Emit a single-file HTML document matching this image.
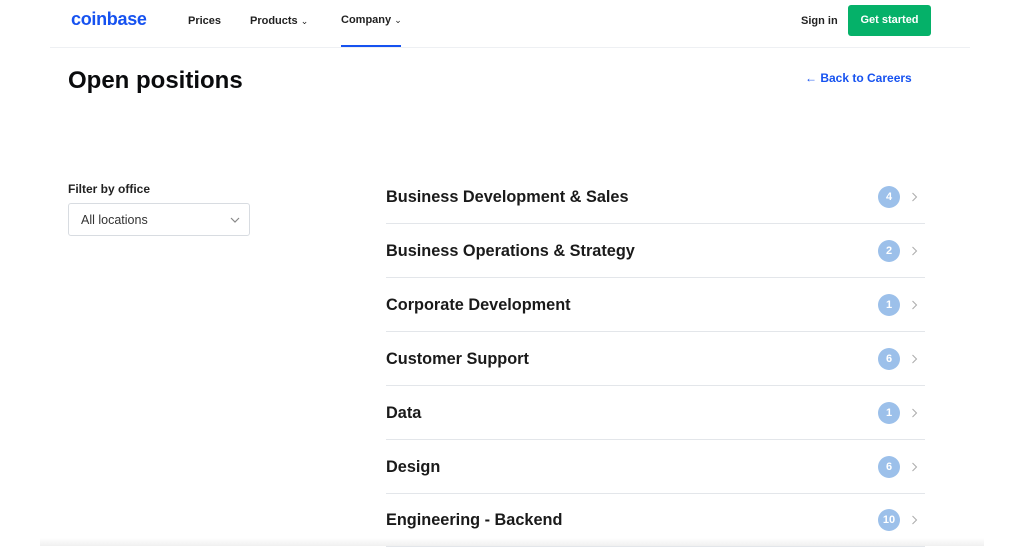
<!DOCTYPE html>
<html><head><style>
*{margin:0;padding:0;box-sizing:border-box}
body{width:1024px;height:546px;overflow:hidden;background:#fff;font-family:"Liberation Sans",sans-serif;color:#0a0b0d;position:relative}
.a{position:absolute;white-space:nowrap}
.nav{font-size:11px;font-weight:bold;color:#222}
.row{position:absolute;left:386px;width:539px;height:54px;border-bottom:1px solid #e3e6ea}
.row span.t{position:absolute;left:0;top:18px;font-size:16.3px;font-weight:bold;color:#1a1a1a}
.b{position:absolute;left:492px;top:16px;width:22px;height:22px;border-radius:50%;background:#9cc0ea;color:#fff;font-size:11px;font-weight:bold;text-align:center;line-height:22px}
.c{position:absolute;left:524px;top:21px}
</style></head><body>
<div class="a" style="left:71px;top:9px;font-size:18px;font-weight:bold;color:#1652f0;letter-spacing:-0.3px">coinbase</div>
<div class="a nav" style="left:188px;top:15px">Prices</div>
<div class="a nav" style="left:250px;top:15px">Products <span style="font-weight:normal;font-size:9px">&#8964;</span></div>
<div class="a nav" style="left:341px;top:14px">Company <span style="font-weight:normal;font-size:9px">&#8964;</span></div>
<div class="a" style="left:341px;top:45px;width:60px;height:2px;background:#1652f0"></div>
<div class="a" style="left:50px;top:47px;width:920px;height:1px;background:#eef0f3"></div>
<div class="a nav" style="left:801px;top:15px">Sign in</div>
<div class="a" style="left:848px;top:5px;width:83px;height:31px;background:#05b169;border-radius:3px;color:#fff;font-size:11px;font-weight:bold;text-align:center;line-height:31px">Get started</div>
<div class="a" style="left:68px;top:67px;font-size:24px;font-weight:bold;color:#0a0b0d">Open positions</div>
<div class="a" style="left:805px;top:71px;font-size:12px;font-weight:bold;color:#1652f0">&larr;&nbsp;Back to Careers</div>
<div class="a" style="left:68px;top:182px;font-size:12px;font-weight:bold;color:#222">Filter by office</div>
<div class="a" style="left:68px;top:203px;width:182px;height:33px;border:1px solid #d8dce1;border-radius:3px;font-size:12.5px;color:#333;padding:9px 0 0 12px">All locations
<svg style="position:absolute;right:9px;top:13px" width="10" height="6" viewBox="0 0 10 6"><path d="M1 1l4 4 4-4" fill="none" stroke="#888" stroke-width="1.2"/></svg></div>
<div class="row" style="top:170px"><span class="t">Business Development &amp; Sales</span><span class="b">4</span><svg class="c" width="8" height="12" viewBox="0 0 8 12"><path d="M2.5 2l4 4-4 4" fill="none" stroke="#aaa" stroke-width="1"/></svg></div>
<div class="row" style="top:224px"><span class="t">Business Operations &amp; Strategy</span><span class="b">2</span><svg class="c" width="8" height="12" viewBox="0 0 8 12"><path d="M2.5 2l4 4-4 4" fill="none" stroke="#aaa" stroke-width="1"/></svg></div>
<div class="row" style="top:278px"><span class="t">Corporate Development</span><span class="b">1</span><svg class="c" width="8" height="12" viewBox="0 0 8 12"><path d="M2.5 2l4 4-4 4" fill="none" stroke="#aaa" stroke-width="1"/></svg></div>
<div class="row" style="top:332px"><span class="t">Customer Support</span><span class="b">6</span><svg class="c" width="8" height="12" viewBox="0 0 8 12"><path d="M2.5 2l4 4-4 4" fill="none" stroke="#aaa" stroke-width="1"/></svg></div>
<div class="row" style="top:386px"><span class="t">Data</span><span class="b">1</span><svg class="c" width="8" height="12" viewBox="0 0 8 12"><path d="M2.5 2l4 4-4 4" fill="none" stroke="#aaa" stroke-width="1"/></svg></div>
<div class="row" style="top:440px"><span class="t">Design</span><span class="b">6</span><svg class="c" width="8" height="12" viewBox="0 0 8 12"><path d="M2.5 2l4 4-4 4" fill="none" stroke="#aaa" stroke-width="1"/></svg></div>
<div class="row" style="top:493px"><span class="t">Engineering - Backend</span><span class="b">10</span><svg class="c" width="8" height="12" viewBox="0 0 8 12"><path d="M2.5 2l4 4-4 4" fill="none" stroke="#aaa" stroke-width="1"/></svg></div>
<div class="a" style="left:40px;top:538px;width:944px;height:8px;background:linear-gradient(#fff,#f0f0f0)"></div>
</body></html>
